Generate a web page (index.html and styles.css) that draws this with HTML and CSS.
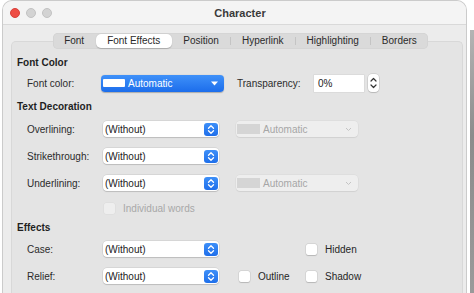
FILE: index.html
```html
<!DOCTYPE html>
<html lang="en">
<head>
    <meta charset="UTF-8">
    <meta name="viewport" content="width=device-width, initial-scale=1.0">
    <title>Character</title>
    <link rel="stylesheet" href="styles.css">
</head>
<body>
    <div class="screen">
        <div class="window">
            <div class="titlebar">
                <div class="lights">
                    <span class="light close"></span>
                    <span class="light"></span>
                    <span class="light"></span>
                </div>
                <div class="title">Character</div>
                <div></div>
            </div>

            <div class="content">
                <div class="tabs">
                    <div class="tabbar">
                        <div class="tab">Font</div>
                        <div class="tab active">Font Effects</div>
                        <div class="tab">Position</div>
                        <div class="tab sep">Hyperlink</div>
                        <div class="tab sep">Highlighting</div>
                        <div class="tab sep">Borders</div>
                    </div>
                </div>

                <div class="panel">
                    <div class="section-title">Font Color</div>
                    <div class="row tight">
                        <div class="label">Font color:</div>
                        <div class="color-pick active">
                            <span class="swatch"></span>
                            <span class="pick-text">Automatic</span>
                            <svg class="pick-arrow" width="7" height="5" viewBox="0 0 7 5"><path d="M0 0.5h7L3.5 4.5z" fill="#fff"/></svg>
                        </div>
                        <div class="label trans">Transparency:</div>
                        <div class="field">0%</div>
                        <div class="spinner">
                            <svg width="11" height="18" viewBox="0 0 11 18">
                                <path d="M3 7l2.5-2.5L8 7" fill="none" stroke="#333" stroke-width="1.2" stroke-linecap="round" stroke-linejoin="round"/>
                                <path d="M3 11l2.5 2.5L8 11" fill="none" stroke="#333" stroke-width="1.2" stroke-linecap="round" stroke-linejoin="round"/>
                            </svg>
                        </div>
                    </div>

                    <div class="section-title decoration">Text Decoration</div>
                    <div class="row">
                        <div class="label">Overlining:</div>
                        <div class="select"><span>(Without)</span><span class="select-arrow"><svg width="14" height="13" viewBox="0 0 14 13"><path d="M4.5 5.2L7 2.8l2.5 2.4M4.5 7.8L7 10.2l2.5-2.4" fill="none" stroke="#fff" stroke-width="1.3" stroke-linecap="round" stroke-linejoin="round"/></svg></span></div>
                        <div class="color-pick disabled">
                            <span class="swatch"></span>
                            <span class="pick-text">Automatic</span>
                            <svg class="pick-arrow" width="7" height="5" viewBox="0 0 7 5"><path d="M1 1l2.5 2.5L6 1" fill="none" stroke="#c4c4c4" stroke-width="1"/></svg>
                        </div>
                    </div>
                    <div class="row">
                        <div class="label">Strikethrough:</div>
                        <div class="select"><span>(Without)</span><span class="select-arrow"><svg width="14" height="13" viewBox="0 0 14 13"><path d="M4.5 5.2L7 2.8l2.5 2.4M4.5 7.8L7 10.2l2.5-2.4" fill="none" stroke="#fff" stroke-width="1.3" stroke-linecap="round" stroke-linejoin="round"/></svg></span></div>
                    </div>
                    <div class="row">
                        <div class="label">Underlining:</div>
                        <div class="select"><span>(Without)</span><span class="select-arrow"><svg width="14" height="13" viewBox="0 0 14 13"><path d="M4.5 5.2L7 2.8l2.5 2.4M4.5 7.8L7 10.2l2.5-2.4" fill="none" stroke="#fff" stroke-width="1.3" stroke-linecap="round" stroke-linejoin="round"/></svg></span></div>
                        <div class="color-pick disabled">
                            <span class="swatch"></span>
                            <span class="pick-text">Automatic</span>
                            <svg class="pick-arrow" width="7" height="5" viewBox="0 0 7 5"><path d="M1 1l2.5 2.5L6 1" fill="none" stroke="#c4c4c4" stroke-width="1"/></svg>
                        </div>
                    </div>
                    <div class="row words">
                        <label class="check disabled"><span class="box"></span>Individual words</label>
                    </div>

                    <div class="section-title effects">Effects</div>
                    <div class="row">
                        <div class="label">Case:</div>
                        <div class="select"><span>(Without)</span><span class="select-arrow"><svg width="14" height="13" viewBox="0 0 14 13"><path d="M4.5 5.2L7 2.8l2.5 2.4M4.5 7.8L7 10.2l2.5-2.4" fill="none" stroke="#fff" stroke-width="1.3" stroke-linecap="round" stroke-linejoin="round"/></svg></span></div>
                        <label class="check hidden-opt"><span class="box"></span>Hidden</label>
                    </div>
                    <div class="row">
                        <div class="label">Relief:</div>
                        <div class="select"><span>(Without)</span><span class="select-arrow"><svg width="14" height="13" viewBox="0 0 14 13"><path d="M4.5 5.2L7 2.8l2.5 2.4M4.5 7.8L7 10.2l2.5-2.4" fill="none" stroke="#fff" stroke-width="1.3" stroke-linecap="round" stroke-linejoin="round"/></svg></span></div>
                        <label class="check outline"><span class="box"></span>Outline</label>
                        <label class="check"><span class="box"></span>Shadow</label>
                    </div>
                </div>
            </div>
        </div>
        <div class="backdrop"></div>
    </div>
</body>
</html>
```

FILE: styles.css
```css
html, body {
    margin: 0;
    padding: 0;
    height: 293px;
    overflow: hidden;
}

body {
    background-color: #ffffff;
    font-family: "Liberation Sans", Arial, sans-serif;
    font-size: 10px;
    color: #262626;
}

.screen {
    display: flex;
    height: 293px;
}

.window {
    box-sizing: border-box;
    width: 465px;
    margin-left: 2px;
    height: 293px;
    background-color: #ececec;
    border: 1px solid #cbcbcb;
    border-bottom: none;
    border-radius: 10px 10px 0 0;
    display: flex;
    flex-direction: column;
    overflow: hidden;
}

.backdrop {
    flex: 1;
    margin-top: 30px;
    margin-left: 3px;
    background: linear-gradient(to bottom, #b4b4b4, #8c8c8c 40%, #9a9a9a);
}

/* title bar */
.titlebar {
    box-sizing: border-box;
    height: 24px;
    background-color: #f4f4f4;
    border-bottom: 1px solid #d9d9d9;
    display: grid;
    grid-template-columns: 1fr auto 1fr;
    align-items: center;
    padding-left: 7px;
}

.lights {
    display: flex;
    gap: 6px;
}

.light {
    box-sizing: border-box;
    width: 10px;
    height: 10px;
    border-radius: 50%;
    background-color: #d3d3d3;
    border: 0.5px solid #c2c2c2;
}

.light.close {
    background-color: #ee4d44;
    border-color: #d8403a;
}

.title {
    font-size: 11px;
    font-weight: bold;
    color: #3a3a3a;
    padding-left: 4px;
}

/* tabs */
.content {
    flex: 1;
    display: flex;
    flex-direction: column;
    padding: 8px 3px 0 8px;
}

.tabs {
    display: flex;
    justify-content: center;
    position: relative;
    z-index: 1;
    margin-bottom: -8px;
    padding-left: 7px;
}

.tabbar {
    display: flex;
    height: 16px;
    background-color: #dadada;
    border-radius: 5px;
    box-shadow: inset 0 0 0 0.5px #cfcfcf;
}

.tab {
    padding: 0 11.5px;
    line-height: 16px;
    color: #2a2a2a;
    position: relative;
}

.tab.sep::before {
    content: "";
    position: absolute;
    left: 0;
    top: 4px;
    height: 8px;
    border-left: 1px solid #c4c4c4;
}

.tab.active {
    background-color: #ffffff;
    border-radius: 5px;
    margin: 1px 0;
    line-height: 14px;
    box-shadow: 0 0.5px 1px rgba(0, 0, 0, 0.2);
}

/* panel */
.panel {
    flex: 1;
    background-color: #e4e4e4;
    border: 1px solid #d8d8d8;
    border-bottom: none;
    border-radius: 5px 5px 0 0;
    padding: 14px 0 0 5px;
}

.section-title {
    font-weight: bold;
    height: 14px;
    line-height: 14px;
    color: #1f1f1f;
}

.section-title.decoration {
    margin-top: 8px;
}

.section-title.effects {
    margin-top: 5px;
}

.row {
    display: flex;
    align-items: center;
    height: 16px;
    padding-left: 10px;
    margin-top: 11px;
}

.section-title + .row {
    margin-top: 7px;
}

.section-title.effects + .row {
    margin-top: 6px;
}

.section-title + .row.tight {
    margin-top: 4px;
    height: 18px;
}

.row.words {
    margin-top: 9px;
}

.label {
    width: 76px;
    flex-shrink: 0;
    color: #2b2b2b;
}

.label.trans {
    width: 77px;
    margin-left: 13px;
}

/* controls */
.select {
    box-sizing: border-box;
    width: 116px;
    height: 16px;
    background-color: #ffffff;
    border-radius: 4px;
    box-shadow: 0 0 0 0.5px rgba(0, 0, 0, 0.12), 0 1px 1px rgba(0, 0, 0, 0.12);
    display: flex;
    align-items: center;
    justify-content: space-between;
    padding: 0 1px 0 2px;
    color: #222;
}

.select-arrow {
    display: flex;
    width: 14px;
    height: 13px;
    border-radius: 3px;
    background: linear-gradient(to bottom, #3d8ff8, #1f6fea);
}

.color-pick {
    box-sizing: border-box;
    width: 123px;
    height: 17px;
    border-radius: 4px;
    display: flex;
    align-items: center;
    padding: 0 6px 0 2px;
}

.color-pick .swatch {
    width: 22px;
    height: 8px;
    margin-right: 3px;
}

.color-pick .pick-text {
    flex: 1;
}

.color-pick.active {
    margin-left: -2px;
    background: linear-gradient(to bottom, #3f91f9, #1c6deb);
    color: #ffffff;
    box-shadow: 0 0.5px 1px rgba(0, 0, 0, 0.25);
}

.color-pick.active .swatch {
    background-color: #ffffff;
    border-radius: 1px;
}

.color-pick.disabled {
    margin-left: 17px;
    width: 122px;
    height: 16px;
    padding-left: 1px;
    background-color: #eeeeee;
    color: #a6a6a6;
    box-shadow: 0 0 0 0.5px rgba(0, 0, 0, 0.05), 0 1px 1px rgba(0, 0, 0, 0.06);
}

.color-pick.disabled .swatch {
    width: 23px;
    height: 10px;
    background-color: #d5d5d5;
}

.field {
    box-sizing: border-box;
    width: 50px;
    height: 17px;
    line-height: 17px;
    background-color: #ffffff;
    padding-left: 4px;
    color: #222;
    box-shadow: 0 0 0 0.5px rgba(0, 0, 0, 0.08);
}

.spinner {
    display: flex;
    width: 11px;
    height: 18px;
    margin-left: 4px;
    background-color: #ffffff;
    border-radius: 4px;
    box-shadow: 0 0 0 0.5px rgba(0, 0, 0, 0.15), 0 1px 1px rgba(0, 0, 0, 0.12);
}

.check {
    display: flex;
    align-items: center;
    gap: 8px;
    color: #262626;
}

.check .box {
    width: 11px;
    height: 11px;
    border-radius: 2px;
    background-color: #ffffff;
    box-shadow: 0 0 0 0.5px rgba(0, 0, 0, 0.1), 0 0.5px 1px rgba(0, 0, 0, 0.15);
}

.check.disabled {
    margin-left: 77px;
    color: #a8a8a8;
}

.check.disabled .box {
    background-color: #eeeeee;
    box-shadow: 0 0 0 0.5px rgba(0, 0, 0, 0.04);
}

.check.hidden-opt {
    margin-left: 87px;
}

.check.outline {
    margin-left: 20px;
    width: 67px;
}
```
